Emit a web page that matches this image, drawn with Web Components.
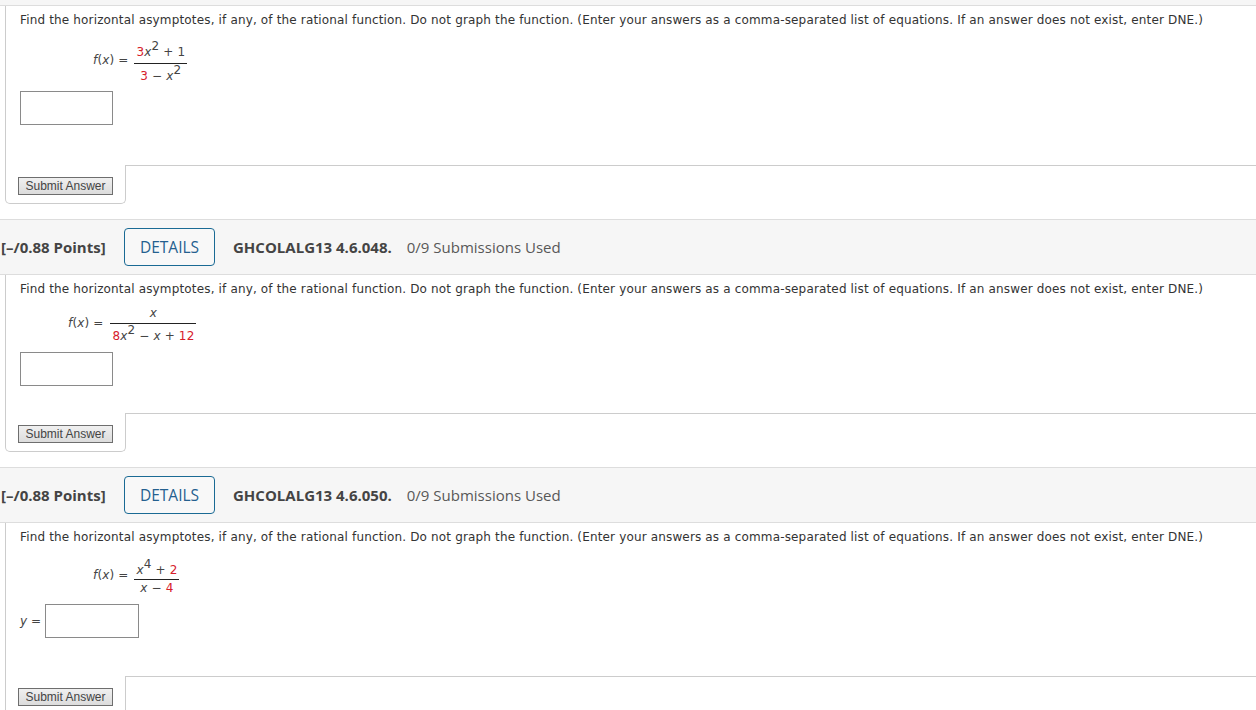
<!DOCTYPE html>
<html lang="en">
<head>
<meta charset="utf-8">
<title>Horizontal asymptotes</title>
<style>
    html, body { margin: 0; padding: 0; height: 710px; overflow: hidden; background: #fff; }
    .r { color: #d6202a; }
    i { font-style: italic; }
    sup { font-size: 12px; line-height: 0; vertical-align: 6px; }
</style>
</head>
<body>

<template id="q-header-tpl">
    <style>
        :host {
            display: flex;
            align-items: center;
            box-sizing: border-box;
            height: 56px;
            padding-left: 1px;
            background: #f6f6f6;
            border-top: 1px solid #ddd;
            border-bottom: 1px solid #ddd;
            font: 15px "Open Sans", sans-serif;
            color: #444;
        }
        .points { font-weight: 700; width: 123px; }
        .details {
            box-sizing: border-box;
            width: 91px;
            height: 38px;
            display: flex;
            align-items: center;
            justify-content: center;
            border: 1px solid #1a6a94;
            border-radius: 4px;
            font-size: 15.5px;
            color: #24608f;
            background: #f8f8f8;
        }
        .code { font-weight: 700; margin-left: 18px; }
        .used { margin-left: 15px; color: #585858; }
    </style>
    <span class="points"><slot name="points"></slot></span>
    <span class="details">DETAILS</span>
    <span class="code"><slot name="code"></slot></span>
    <span class="used"><slot name="used"></slot></span>
</template>

<template id="q-body-tpl">
    <style>
        :host { display: block; }
        .main {
            border-left: 1px solid #ccc;
            margin-left: 5px;
            padding: 5px 0 0 14px;
            height: var(--main-h);
            box-sizing: border-box;
        }
        .prompt {
            font: 12px/18px "DejaVu Sans", sans-serif;
            letter-spacing: 0.155px;
            color: #333;
            white-space: nowrap;
        }
        .foot { display: flex; height: 39px; margin-left: 5px; }
        .tab {
            box-sizing: border-box;
            width: 121px;
            border: 1px solid #ccc;
            border-top: 0;
            border-radius: 0 0 5px 5px;
            padding: 12px 0 0 12px;
        }
        .rest { flex: 1; border-top: 1px solid #ccc; }
    </style>
    <div class="main">
        <div class="prompt"><slot name="prompt"></slot></div>
        <slot></slot>
    </div>
    <div class="foot">
        <div class="tab"><slot name="submit"></slot></div>
        <div class="rest"></div>
    </div>
</template>

<template id="q-math-tpl">
    <style>
        :host {
            display: flex;
            align-items: center;
            padding-left: var(--indent);
            margin-top: var(--math-top);
            font: 12px "DejaVu Sans", sans-serif;
            letter-spacing: 0.15px;
            color: #444;
            white-space: nowrap;
        }
        .eq { margin-right: var(--eq-gap, 2px); margin-bottom: var(--eq-lift); }
        .frac { display: flex; flex-direction: column; align-items: stretch; text-align: center; }
        .num, .den { display: flex; justify-content: center; align-items: center; padding: 0 2px; }
        .num { height: var(--num-h); border-bottom: 1px solid #222; }
        .den { height: var(--den-h); }
    </style>
    <span class="eq"><i>f</i>(<i>x</i>) =&nbsp;</span>
    <span class="frac">
        <span class="num"><span><slot name="num"></slot></span></span>
        <span class="den"><span><slot name="den"></slot></span></span>
    </span>
</template>

<template id="q-answer-tpl">
    <style>
        :host {
            display: flex;
            align-items: center;
            margin-top: var(--answer-top);
            font: 12px "DejaVu Sans", sans-serif;
            color: #444;
        }
        .box {
            box-sizing: border-box;
            width: var(--box-w, 93px);
            height: 34px;
            border: 1px solid #8a8a8a;
            background: #fff;
        }
    </style>
    <slot></slot>
    <div class="box"></div>
</template>

<template id="q-submit-tpl">
    <style>
        :host {
            display: block;
            box-sizing: border-box;
            width: 95px;
            height: 18px;
            border: 1px solid #6e6e6e;
            background: linear-gradient(#f0f0f0, #dcdcdc);
            font: 12px/16px "Liberation Sans", sans-serif;
            color: #444;
            text-align: center;
            white-space: nowrap;
        }
    </style>
    <slot></slot>
</template>

<q-strip style="display:block;height:5px;background:#f6f6f6;border-bottom:1px solid #ddd"></q-strip>

<q-body style="--main-h:159px">
    <span slot="prompt">Find the horizontal asymptotes, if any, of the rational function. Do not graph the function. (Enter your answers as a comma-separated list of equations. If an answer does not exist, enter DNE.)</span>
    <q-math style="--indent:73px;--math-top:12px;--num-h:22px;--den-h:24px;--eq-lift:10px">
        <span slot="num"><span class="r">3</span><i>x</i><sup>2</sup> + 1</span>
        <span slot="den"><span class="r">3</span> − <i>x</i><sup>2</sup></span>
    </q-math>
    <q-answer style="--answer-top:3px"></q-answer>
    <q-submit slot="submit">Submit Answer</q-submit>
</q-body>
<div style="height:15px"></div>

<q-header>
    <span slot="points">[–/0.88 Points]</span>
    <span slot="code">GHCOLALG13 4.6.048.</span>
    <span slot="used">0/9 Submissions Used</span>
</q-header>
<q-body style="--main-h:138px">
    <span slot="prompt">Find the horizontal asymptotes, if any, of the rational function. Do not graph the function. (Enter your answers as a comma-separated list of equations. If an answer does not exist, enter DNE.)</span>
    <q-math style="--indent:48px;--math-top:5px;--num-h:20px;--den-h:24px;--eq-lift:6px;--eq-gap:3px">
        <span slot="num"><i>x</i></span>
        <span slot="den"><span class="r">8</span><i>x</i><sup>2</sup> − <i>x</i> + <span class="r">12</span></span>
    </q-math>
    <q-answer style="--answer-top:4px"></q-answer>
    <q-submit slot="submit">Submit Answer</q-submit>
</q-body>
<div style="height:15px"></div>

<q-header>
    <span slot="points">[–/0.88 Points]</span>
    <span slot="code">GHCOLALG13 4.6.050.</span>
    <span slot="used">0/9 Submissions Used</span>
</q-header>
<q-body style="--main-h:153px">
    <span slot="prompt">Find the horizontal asymptotes, if any, of the rational function. Do not graph the function. (Enter your answers as a comma-separated list of equations. If an answer does not exist, enter DNE.)</span>
    <q-math style="--indent:73px;--math-top:15px;--num-h:18px;--den-h:16px;--eq-lift:8px">
        <span slot="num"><i>x</i><sup>4</sup> + <span class="r">2</span></span>
        <span slot="den"><i>x</i> − <span class="r">4</span></span>
    </q-math>
    <q-answer style="--answer-top:8px;--box-w:94px"><span style="margin-right:4px"><i style="margin-right:4px">y</i>=</span></q-answer>
    <q-submit slot="submit">Submit Answer</q-submit>
</q-body>

<script>
    // each element just clones its own template into an open shadow root
    class TemplatedElement extends HTMLElement {
        constructor() {
            super();
            const shadow = this.attachShadow({ mode: 'open' });
            const template = document.getElementById(this.localName + '-tpl');
            if (template) {
                shadow.appendChild(template.content.cloneNode(true));
            }
        }
    }

    for (const name of ['q-header', 'q-body', 'q-math', 'q-answer', 'q-submit', 'q-strip']) {
        customElements.define(name, class extends TemplatedElement {});
    }
</script>
</body>
</html>
